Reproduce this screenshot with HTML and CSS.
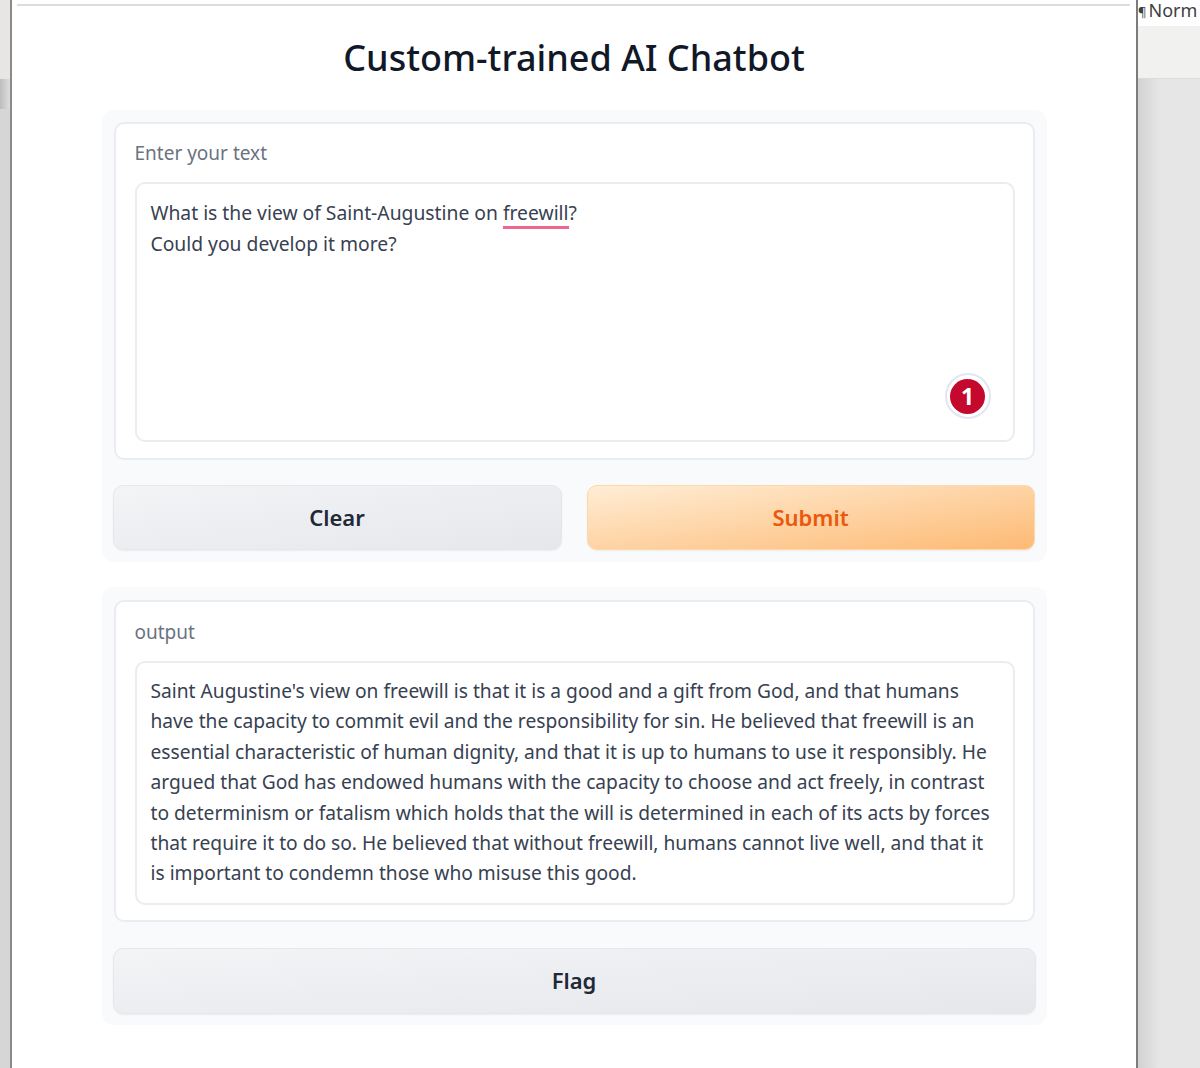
FILE: index.html
```html
<!DOCTYPE html>
<html lang="en">
<head>
    <meta charset="UTF-8">
    <meta name="viewport" content="width=device-width, initial-scale=1.0">
    <title>Custom-trained AI Chatbot</title>
    <link rel="stylesheet" href="styles.css">
</head>
<body>
    <div class="left-strip">
        <div class="left-top"></div>
        <div class="left-tab"></div>
        <div class="left-bottom"></div>
    </div>

    <main class="window">
        <div class="top-line"></div>
        <h1 class="title">Custom-trained AI Chatbot</h1>

        <section class="panel panel-input">
            <div class="card card-input">
                <div class="label">Enter your text</div>
                <div class="textbox textbox-input">
                    What is the view of Saint-Augustine on <span class="misspelled">freewill</span>?<br>
                    Could you develop it more?
                    <div class="badge"><span class="badge-dot">1</span></div>
                </div>
            </div>
            <div class="buttons">
                <button class="btn btn-grey">Clear</button>
                <button class="btn btn-orange">Submit</button>
            </div>
        </section>

        <section class="panel panel-output">
            <div class="card card-output">
                <div class="label">output</div>
                <div class="textbox textbox-output">
                    Saint Augustine's view on freewill is that it is a good and a gift from God, and that humans<br>
                    have the capacity to commit evil and the responsibility for sin. He believed that freewill is an<br>
                    essential characteristic of human dignity, and that it is up to humans to use it responsibly. He<br>
                    argued that God has endowed humans with the capacity to choose and act freely, in contrast<br>
                    to determinism or fatalism which holds that the will is determined in each of its acts by forces<br>
                    that require it to do so. He believed that without freewill, humans cannot live well, and that it<br>
                    is important to condemn those who misuse this good.
                </div>
            </div>
            <button class="btn btn-grey btn-flag">Flag</button>
        </section>
    </main>

    <div class="right-strip">
        <div class="right-top"><span class="pilcrow">¶</span>Norm</div>
        <div class="right-band"></div>
        <div class="right-rest"></div>
    </div>
</body>
</html>
```

FILE: styles.css
```css
body {
    margin: 0;
    height: 1068px;
    display: flex;
    background-color: #fff;
    font-family: "Noto Sans", "Open Sans", sans-serif;
    color: #374151;
}

/* bits of the desktop around the window */
.left-strip {
    width: 10px;
    display: flex;
    flex-direction: column;
    border-right: 2px solid #8a8a8a;
}

.left-top {
    height: 79px;
    background-color: #e8e6e5;
}

.left-tab {
    height: 30px;
    background: linear-gradient(to right, #bdbdbd, #dedede);
}

.left-bottom {
    flex: 1;
    background-color: #d6d6d6;
}

.right-strip {
    flex: 1;
    display: flex;
    flex-direction: column;
    border-left: 2px solid #7c7c7c;
}

.right-top {
    height: 26px;
    background-color: #fff;
    font-size: 18px;
    line-height: 21px;
    color: #3f3f3f;
}

.pilcrow {
    font-size: 13px;
    margin-right: 2px;
}

.right-band {
    height: 52px;
    background-color: #f1f1f0;
    border-bottom: 1px solid #dcdcdc;
}

.right-rest {
    flex: 1;
    background: linear-gradient(to right, #d2d2d2, #e6e6e6 35%);
}

.window {
    width: 1124px;
    display: flex;
    flex-direction: column;
    align-items: center;
}

.top-line {
    align-self: stretch;
    height: 2px;
    margin: 4px 6px 0 5px;
    background-color: #dcdcdc;
}

.title {
    margin: 26px 0 0;
    font-size: 36px;
    line-height: 52px;
    font-weight: 500;
    color: #111827;
}

.panel {
    width: 921px;
    padding: 12px;
    background-color: #f8fafc;
    border-radius: 12px;
}

.panel-input {
    margin-top: 26px;
    height: 428px;
}

.panel-output {
    margin-top: 25px;
    height: 413px;
    padding-top: 13px;
}

.card {
    box-sizing: border-box;
    background-color: #fff;
    border: 2px solid #e9edf2;
    border-radius: 10px;
    padding: 17px 18px 16px 19px;
}

.card-input {
    height: 338px;
}

.card-output {
    height: 322px;
    padding-top: 18px;
}

.label {
    font-size: 19px;
    line-height: 24px;
    color: #6b7280;
}

.textbox {
    position: relative;
    box-sizing: border-box;
    margin-top: 17px;
    padding: 13px 14px;
    border: 2px solid #e9edf2;
    border-radius: 10px;
    font-size: 19.2px;
    line-height: 30.4px;
    white-space: nowrap;
}

.textbox-input {
    height: 260px;
    font-size: 19.3px;
    line-height: 31px;
}

.textbox-output {
    height: 244px;
}

.misspelled {
    border-bottom: 3px solid #f0668e;
}

/* grammar checker badge, sits over the text box */
.badge {
    position: absolute;
    right: 22px;
    bottom: 21px;
    width: 46px;
    height: 46px;
    box-sizing: border-box;
    display: flex;
    align-items: center;
    justify-content: center;
    background-color: #fff;
    border: 2px solid #e2e6ee;
    border-radius: 50%;
}

.badge-dot {
    width: 35px;
    height: 35px;
    border-radius: 50%;
    background-color: #c4082e;
    color: #fff;
    font-size: 23px;
    line-height: 35px;
    font-weight: 700;
    text-align: center;
}

.buttons {
    display: grid;
    grid-template-columns: 449px 448px;
    gap: 25px;
    margin: 25px 0 0 -1px;
}

.btn {
    height: 65px;
    padding: 0 0 2px;
    border-radius: 10px;
    font-family: inherit;
    font-size: 22px;
    font-weight: 600;
    box-shadow: 0 1px 2px rgba(0, 0, 0, 0.06);
}

.btn-grey {
    border: 1px solid #e5e7eb;
    background: linear-gradient(to bottom right, #f3f4f6, #e5e7eb);
    color: #1f2937;
}

.btn-orange {
    border: 1px solid #fed7aa;
    background: linear-gradient(to bottom right, #ffedd5, #fdba74);
    color: #ea580c;
}

.btn-flag {
    display: block;
    width: 923px;
    height: 66px;
    margin: 26px 0 0 -1px;
}
```
